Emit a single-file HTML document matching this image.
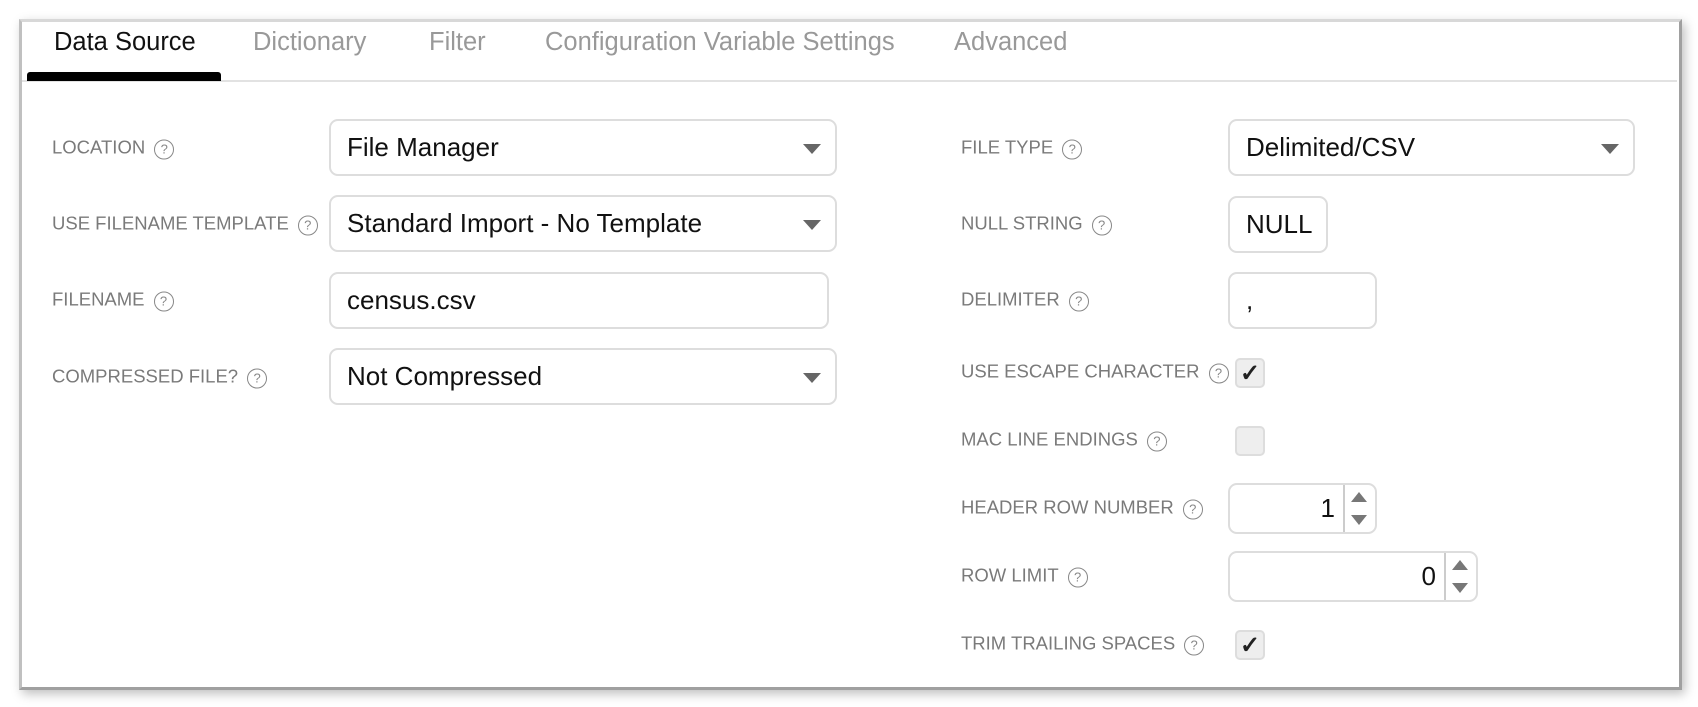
<!DOCTYPE html>
<html><head><style>
body{margin:0;width:1698px;height:707px;background:#fff;font-family:"Liberation Sans",sans-serif;position:relative;overflow:hidden}
.frame{position:absolute;left:19px;top:19px;width:1657px;height:665px;border:3px solid #a0a0a0;border-top-color:#d8d8d8;border-left-color:#c0c0c0;box-shadow:3px 4px 10px rgba(0,0,0,.25)}
.tab{position:absolute;top:28px;font-size:25.5px;color:#999}
.a{position:absolute}
.lbl{position:absolute;font-size:18.5px;color:#7a7a7a;transform:translateY(-50%)}
.q{display:inline-block;width:18px;height:18px;border:1.5px solid #888;border-radius:50%;font-size:13px;line-height:18px;text-align:center;color:#888;margin-left:9px;vertical-align:0px}
.box{position:absolute;border:2px solid #ddd;border-radius:9px;background:#fff;box-sizing:border-box;font-size:26px;color:#111;padding-left:16px;display:flex;align-items:center}
.arr{position:absolute;right:14px;top:50%;margin-top:-4px;width:0;height:0;border-left:9px solid transparent;border-right:9px solid transparent;border-top:10px solid #666}
.cb{position:absolute;width:30px;height:30px;background:#eee;border:2px solid #ddd;border-radius:5px;box-sizing:border-box;font-size:24px;font-weight:bold;text-align:center;line-height:28px;color:#222}
.spin{position:absolute;top:0;bottom:0;width:30px;border-left:2px solid #ccc}
.up{position:absolute;left:6px;top:7px;border-left:8px solid transparent;border-right:8px solid transparent;border-bottom:10px solid #777}
.dn{position:absolute;left:6px;bottom:7px;border-left:8px solid transparent;border-right:8px solid transparent;border-top:10px solid #777}
</style></head><body>
<div class="frame"></div>
<div class="tab" style="left:54px;color:#111">Data Source</div>
<div class="tab" style="left:253px">Dictionary</div>
<div class="tab" style="left:429px">Filter</div>
<div class="tab" style="left:545px">Configuration Variable Settings</div>
<div class="tab" style="left:954px">Advanced</div>
<div class="a" style="left:22px;top:80px;width:1655px;height:2px;background:#e2e2e2"></div>
<div class="a" style="left:27px;top:72px;width:194px;height:9px;background:#000;border-radius:3px 3px 0 0"></div>

<div class="lbl" style="left:52px;top:148px">LOCATION<span class="q">?</span></div>
<div class="lbl" style="left:52px;top:224px">USE FILENAME TEMPLATE<span class="q">?</span></div>
<div class="lbl" style="left:52px;top:300px">FILENAME<span class="q">?</span></div>
<div class="lbl" style="left:52px;top:377px">COMPRESSED FILE?<span class="q">?</span></div>
<div class="box" style="left:329px;top:119px;width:508px;height:57px">File Manager<div class="arr"></div></div>
<div class="box" style="left:329px;top:195px;width:508px;height:57px">Standard Import - No Template<div class="arr"></div></div>
<div class="box" style="left:329px;top:272px;width:500px;height:57px">census.csv</div>
<div class="box" style="left:329px;top:348px;width:508px;height:57px">Not Compressed<div class="arr"></div></div>

<div class="lbl" style="left:961px;top:148px">FILE TYPE<span class="q">?</span></div>
<div class="lbl" style="left:961px;top:224px">NULL STRING<span class="q">?</span></div>
<div class="lbl" style="left:961px;top:300px">DELIMITER<span class="q">?</span></div>
<div class="lbl" style="left:961px;top:372px">USE ESCAPE CHARACTER<span class="q">?</span></div>
<div class="lbl" style="left:961px;top:440px">MAC LINE ENDINGS<span class="q">?</span></div>
<div class="lbl" style="left:961px;top:508px">HEADER ROW NUMBER<span class="q">?</span></div>
<div class="lbl" style="left:961px;top:576px">ROW LIMIT<span class="q">?</span></div>
<div class="lbl" style="left:961px;top:644px">TRIM TRAILING SPACES<span class="q">?</span></div>

<div class="box" style="left:1228px;top:119px;width:407px;height:57px">Delimited/CSV<div class="arr"></div></div>
<div class="box" style="left:1228px;top:196px;width:100px;height:57px;padding-left:16px">NULL</div>
<div class="box" style="left:1228px;top:272px;width:149px;height:57px">,</div>
<div class="cb" style="left:1235px;top:358px">✓</div>
<div class="cb" style="left:1235px;top:426px"></div>
<div class="box" style="left:1228px;top:483px;width:149px;height:51px;justify-content:flex-end;padding-right:40px">1<div class="spin" style="right:0"><div class="up"></div><div class="dn"></div></div></div>
<div class="box" style="left:1228px;top:551px;width:250px;height:51px;justify-content:flex-end;padding-right:40px">0<div class="spin" style="right:0"><div class="up"></div><div class="dn"></div></div></div>
<div class="cb" style="left:1235px;top:630px">✓</div>
</body></html>
